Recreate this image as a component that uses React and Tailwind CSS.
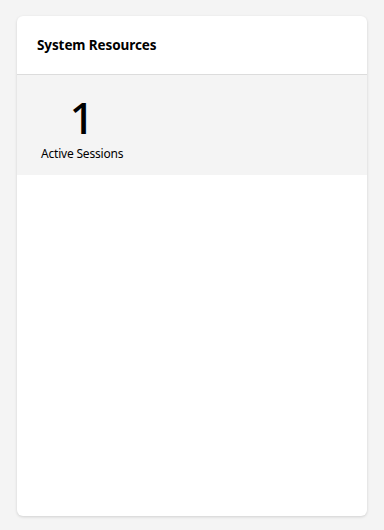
import React from 'react';

const stats = [{ value: '1', label: 'Active Sessions' }];

export default function App() {
    return (
        <div className="min-h-screen bg-[#f4f4f4] px-[17px] pt-4 pb-[14px]" style={{ fontFamily: '"Noto Sans", "Open Sans", sans-serif' }}>
            <div className="h-[500px] w-[350px] rounded-md bg-white shadow-[0_1px_3px_rgba(0,0,0,0.15)] overflow-hidden flex flex-col">
                {/* Header */}
                <div className="h-[59px] flex items-center px-5 border-b border-[#dcdcdc]">
                    <h2 className="text-[13.5px] font-bold text-black tracking-[-0.1px]">System Resources</h2>
                </div>

                {/* Stats */}
                <div className="h-[100px] bg-[#f4f4f4] flex items-start px-6 pt-[16px]">
                    {stats.map((s) => (
                        <div key={s.label} className="flex flex-col items-center">
                            <span className="text-[44px] leading-[52px] font-medium text-black">{s.value}</span>
                            <span className="mt-[3px] text-[12px] leading-4 text-black tracking-[-0.2px]">{s.label}</span>
                        </div>
                    ))}
                </div>

                <div className="flex-1" />
            </div>
        </div>
    );
}
